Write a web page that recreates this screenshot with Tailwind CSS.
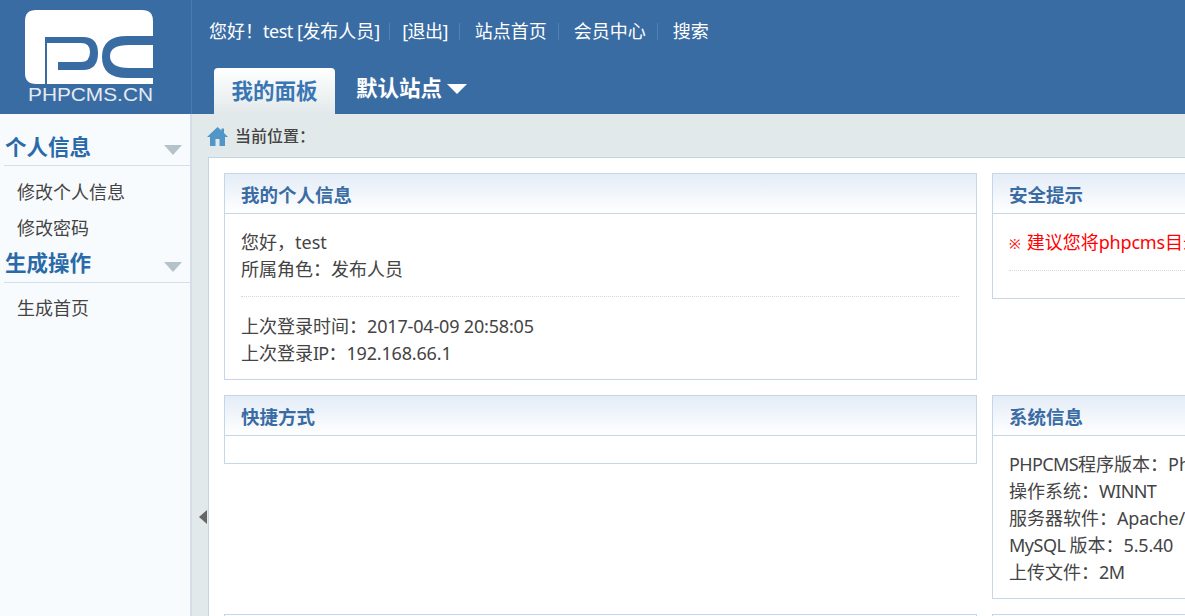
<!DOCTYPE html>
<html lang="zh-CN">
<head>
    <meta charset="UTF-8" />
    <title>PHPCMS</title>
    <script src="https://cdn.jsdelivr.net/npm/@tailwindcss/browser@4"></script>
</head>
<body class="h-screen overflow-hidden flex flex-col bg-white text-[18px] leading-[27px] text-[#444] font-['Noto_Sans','Noto_Sans_CJK_SC',sans-serif]">

<!-- Header -->
<header class="h-[114px] shrink-0 flex bg-[#3a6ca4] text-white">
    <div class="w-[192px] shrink-0 border-r border-[#4a7bb0] pl-[25px] pt-[10px]">
        <svg width="130" height="96" viewBox="0 0 130 96">
            <path d="M11 0H117Q128 0 128 11V74H11Q0 74 0 63V11Q0 0 11 0Z" fill="#fff"/>
            <path d="M20 74V27H58Q73 27 73 43Q73 60 58 60H33V52H56Q65 52 65 42Q65 33 56 33H22V74Z" fill="#3a6ca4"/>
            <path d="M128 26H102Q77 26 77 47Q77 68 102 68H128V58H104Q85 58 85 46Q85 35 104 35H128Z" fill="#3a6ca4"/>
            <text x="3" y="91" fill="#e4ebf3" font-family="Liberation Sans" font-size="18" textLength="125" lengthAdjust="spacingAndGlyphs">PHPCMS.CN</text>
        </svg>
    </div>
    <div class="flex-1 flex flex-col pl-[17px]">
        <nav class="flex items-center h-[64px] pt-[1px]">
            <span>您好&#xFF01;<span class="tracking-[-0.5px]">test [</span>发布人员]</span>
            <span class="w-px h-[17px] bg-[#4f80b6] ml-[9px] mr-[12px]"></span>
            <span class="tracking-[-0.6px]">[退出]</span>
            <span class="w-px h-[17px] bg-[#4f80b6] ml-[11px] mr-[15px]"></span>
            <span>站点首页</span>
            <span class="w-px h-[17px] bg-[#4f80b6] ml-[11px] mr-[15px]"></span>
            <span>会员中心</span>
            <span class="w-px h-[17px] bg-[#4f80b6] ml-[11px] mr-[15px]"></span>
            <span>搜索</span>
        </nav>
        <div class="flex items-end flex-1 pl-[5px]">
            <div class="w-[121px] h-[46px] pb-[1px] rounded-t-[4px] bg-gradient-to-b from-white to-[#e2e9ea] text-[#3a76b4] text-[21.5px] font-bold flex items-center justify-center">我的面板</div>
            <div class="ml-[21px] h-[53px] flex items-center text-[21.5px] font-bold">
                默认站点
                <span class="ml-[5px] mt-[3px] w-0 h-0 border-x-[10px] border-x-transparent border-t-[10px] border-t-white"></span>
            </div>
        </div>
    </div>
</header>

<div class="flex-1 flex min-h-0">
    <!-- Sidebar -->
    <aside class="w-[192px] shrink-0 bg-[#f8fbfd] pl-[4px] border-r-2 border-[#d5dee6]">
        <div class="h-[52px] flex items-end justify-between border-b border-[#d5e0e8] pb-[2px] pr-[8px]">
            <h2 class="text-[21.5px] font-bold leading-[32px] text-[#2a6aa8] pl-px">个人信息</h2>
            <span class="mb-[8px] w-0 h-0 border-x-[9px] border-x-transparent border-t-[10px] border-t-[#b5c2c9]"></span>
        </div>
        <ul class="pl-[13px] pt-[8px]">
            <li class="h-[36px] leading-[36px]">修改个人信息</li>
            <li class="h-[36px] leading-[36px]">修改密码</li>
        </ul>
        <div class="h-[38px] flex items-end justify-between border-b border-[#d5e0e8] pb-[3px] pr-[8px] -mt-[1px]">
            <h2 class="text-[21.5px] font-bold leading-[32px] text-[#2a6aa8] pl-px">生成操作</h2>
            <span class="mb-[7px] w-0 h-0 border-x-[9px] border-x-transparent border-t-[10px] border-t-[#b5c2c9]"></span>
        </div>
        <ul class="pl-[13px] pt-[7px]">
            <li class="h-[36px] leading-[36px]">生成首页</li>
        </ul>
    </aside>

    <!-- Collapse strip + main -->
    <main class="flex-1 min-w-0 flex flex-col bg-[#e2e9ea]">
        <div class="h-[43px] shrink-0 flex items-center pl-[15px] pt-[1px] text-[16px] text-[#444] font-medium">
            <svg width="21" height="19" viewBox="0 0 21 19" class="mr-[7px]">
                <path d="M10.5 0L0 10H3V19H8.5V12H12.5V19H18V10H21L17 6V1.5H14.5V3.5Z" fill="#5295c7"/>
            </svg>
            <span>当前位置&#xFF1A;</span>
        </div>
        <div class="flex-1 min-h-0 flex">
            <div class="w-[16px] shrink-0 pl-[7px] pt-[353px]">
                <div class="w-0 h-0 border-y-[7px] border-y-transparent border-r-[8px] border-r-[#666]"></div>
            </div>
            <div class="flex-1 min-w-0 bg-white border-l border-t border-[#c3d3e0] pl-[15px] pt-[15px] overflow-hidden">
                <div class="grid grid-cols-[753px_400px] grid-rows-[207px_204px_auto] gap-[15px] items-start">

                    <section class="border border-[#c5d6e8] h-[207px]">
                        <h3 class="h-[40px] border-b border-[#c5d6e8] bg-gradient-to-b from-[#e4ecf7] to-white pl-[16px] text-[18.5px] leading-[41px] font-bold text-[#3a6ca4]">我的个人信息</h3>
                        <div class="px-[16px] pt-[15px]">
                            <p>您好&#xFF0C;test</p>
                            <p>所属角色&#xFF1A;发布人员</p>
                            <div class="w-[718px] border-t border-dotted border-[#d8d8d8] mt-[13px] mb-[16px]"></div>
                            <p>上次登录时间&#xFF1A;<span class="tracking-[-0.17px]">2017-04-09 20:58:05</span></p>
                            <p>上次登录<span class="tracking-[-0.8px]">IP</span>&#xFF1A;<span class="tracking-[-0.17px]">192.168.66.1</span></p>
                        </div>
                    </section>

                    <section class="border border-[#c5d6e8] h-[126px]">
                        <h3 class="h-[40px] border-b border-[#c5d6e8] bg-gradient-to-b from-[#e4ecf7] to-white pl-[16px] text-[18.5px] leading-[41px] font-bold text-[#3a6ca4]">安全提示</h3>
                        <div class="px-[16px] pt-[15px]">
                            <p class="text-[#f00] whitespace-nowrap"><span class="text-[14px] mr-[6px]">※</span>建议您将<span class="tracking-[-0.2px]">phpcms</span>目录设置为不可写</p>
                            <div class="border-t border-dotted border-[#d8d8d8] mt-[13px]"></div>
                        </div>
                    </section>

                    <section class="border border-[#c5d6e8] h-[69px]">
                        <h3 class="h-[40px] border-b border-[#c5d6e8] bg-gradient-to-b from-[#e4ecf7] to-white pl-[16px] text-[18.5px] leading-[41px] font-bold text-[#3a6ca4]">快捷方式</h3>
                    </section>

                    <section class="border border-[#c5d6e8] h-[204px]">
                        <h3 class="h-[40px] border-b border-[#c5d6e8] bg-gradient-to-b from-[#e4ecf7] to-white pl-[16px] text-[18.5px] leading-[41px] font-bold text-[#3a6ca4]">系统信息</h3>
                        <div class="px-[16px] pt-[15px] whitespace-nowrap">
                            <p><span class="tracking-[-0.6px]">PHPCMS</span>程序版本&#xFF1A;Phpcms V9.6.0</p>
                            <p>操作系统&#xFF1A;<span class="tracking-[-0.6px]">WINNT</span></p>
                            <p>服务器软件&#xFF1A;<span class="tracking-[-0.2px]">Apache/2.4.23</span></p>
                            <p><span class="tracking-[-0.5px]">MySQL </span>版本&#xFF1A;<span class="tracking-[-0.2px]">5.5.40</span></p>
                            <p>上传文件&#xFF1A;<span class="tracking-[-0.5px]">2M</span></p>
                        </div>
                    </section>

                    <section class="border border-[#c5d6e8] h-[40px]"></section>
                    <section class="border border-[#c5d6e8] h-[40px]"></section>
                </div>
            </div>
        </div>
    </main>
</div>
</body>
</html>
